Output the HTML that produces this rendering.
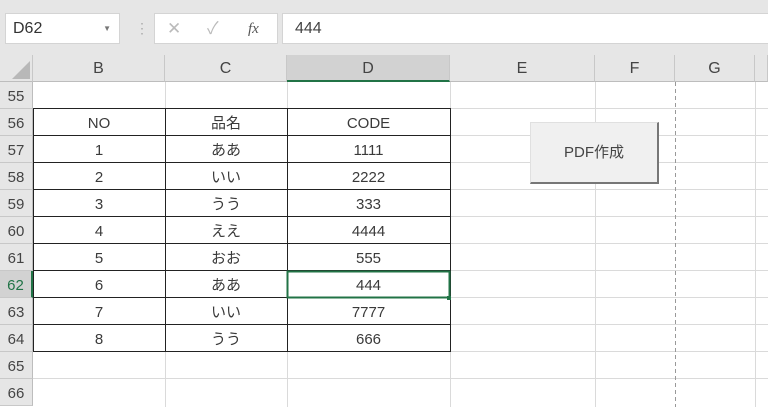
<!DOCTYPE html>
<html><head><meta charset="utf-8"><style>
*{margin:0;padding:0;box-sizing:border-box}
body{width:768px;height:407px;overflow:hidden;background:#fff;font-family:"Liberation Sans","Noto Sans CJK JP",sans-serif;color:#333;position:relative}
.abs{position:absolute}
.top{left:0;top:0;width:768px;height:55px;background:#e6e6e6}
.box{background:#fff;border:1px solid #d4d4d4}
.hdr{top:55px;height:27px;background:#e6e6e6;border-right:1px solid #c8c8c8;border-bottom:1px solid #bdbdbd;font-size:16px;text-align:center;line-height:27px;color:#444}
.rh{left:0;width:33px;height:27px;background:#e6e6e6;border-bottom:1px solid #c8c8c8;border-right:1px solid #bdbdbd;font-size:15px;text-align:center;line-height:29px;color:#444}
.c{height:27px;font-size:15px;text-align:center;line-height:30px;color:#3a3a3a}
</style></head><body>
<div class="abs top"></div>
<div class="abs box" style="left:5px;top:13px;width:115px;height:31px;font-size:16px;line-height:30px;padding-left:7px">D62<span style="position:absolute;right:8px;top:0;font-size:8px;color:#777">▼</span></div>
<div class="abs" style="left:135px;top:20px;color:#aaa;font-size:14px">⋮</div>
<div class="abs box" style="left:154px;top:13px;width:124px;height:31px;color:#bbb;font-size:17px;line-height:30px">
<span style="position:absolute;left:12px">✕</span><span style="position:absolute;left:52px">✓</span><span style="position:absolute;left:93px;color:#555;font-family:'Liberation Serif',serif;font-style:italic;font-size:15px">fx</span></div>
<div class="abs box" style="left:282px;top:13px;width:490px;height:31px;font-size:16px;line-height:30px;padding-left:12px;color:#444">444</div>
<svg class="abs" style="left:0;top:0" width="768" height="407">
<g stroke="#dadada" stroke-width="1">
<line x1="165.5" y1="82" x2="165.5" y2="407"/><line x1="287.5" y1="82" x2="287.5" y2="407"/><line x1="450.5" y1="82" x2="450.5" y2="407"/><line x1="595.5" y1="82" x2="595.5" y2="407"/><line x1="755.5" y1="82" x2="755.5" y2="407"/>
<line x1="33" y1="108.5" x2="768" y2="108.5"/><line x1="33" y1="135.5" x2="768" y2="135.5"/><line x1="33" y1="162.5" x2="768" y2="162.5"/><line x1="33" y1="189.5" x2="768" y2="189.5"/><line x1="33" y1="216.5" x2="768" y2="216.5"/><line x1="33" y1="243.5" x2="768" y2="243.5"/><line x1="33" y1="270.5" x2="768" y2="270.5"/><line x1="33" y1="297.5" x2="768" y2="297.5"/><line x1="33" y1="324.5" x2="768" y2="324.5"/><line x1="33" y1="351.5" x2="768" y2="351.5"/><line x1="33" y1="378.5" x2="768" y2="378.5"/>
</g>
<line x1="675.5" y1="82" x2="675.5" y2="407" stroke="#999" stroke-dasharray="4,3"/>
<g stroke="#222" stroke-width="1">
<rect x="33.5" y="108.5" width="417" height="243" fill="none"/>
<line x1="165.5" y1="108" x2="165.5" y2="352"/><line x1="287.5" y1="108" x2="287.5" y2="352"/>
<line x1="33" y1="135.5" x2="450" y2="135.5"/><line x1="33" y1="162.5" x2="450" y2="162.5"/><line x1="33" y1="189.5" x2="450" y2="189.5"/><line x1="33" y1="216.5" x2="450" y2="216.5"/><line x1="33" y1="243.5" x2="450" y2="243.5"/><line x1="33" y1="270.5" x2="450" y2="270.5"/><line x1="33" y1="297.5" x2="450" y2="297.5"/><line x1="33" y1="324.5" x2="450" y2="324.5"/>
</g>
<rect x="287.5" y="271.5" width="162" height="26" fill="none" stroke="#217346" stroke-width="2"/>
<rect x="447" y="296" width="4" height="4" fill="#217346"/>
</svg>
<div class="abs hdr" style="left:0;width:33px"><svg width="33" height="27"><polygon points="30,6 30,24 12,24" fill="#b8b8b8"/></svg></div>
<div class="abs hdr" style="left:33px;width:132px">B</div>
<div class="abs hdr" style="left:165px;width:122px">C</div>
<div class="abs hdr" style="left:287px;width:163px;background:#d2d2d2;border-bottom:2px solid #217346">D</div>
<div class="abs hdr" style="left:450px;width:145px">E</div>
<div class="abs hdr" style="left:595px;width:80px">F</div>
<div class="abs hdr" style="left:675px;width:80px">G</div>
<div class="abs hdr" style="left:755px;width:13px"></div>
<div class="abs rh" style="top:82px">55</div>
<div class="abs rh" style="top:109px">56</div>
<div class="abs rh" style="top:136px">57</div>
<div class="abs rh" style="top:163px">58</div>
<div class="abs rh" style="top:190px">59</div>
<div class="abs rh" style="top:217px">60</div>
<div class="abs rh" style="top:244px">61</div>
<div class="abs rh" style="top:271px;background:#d2d2d2;color:#217346;border-right:2px solid #217346">62</div>
<div class="abs rh" style="top:298px">63</div>
<div class="abs rh" style="top:325px">64</div>
<div class="abs rh" style="top:352px">65</div>
<div class="abs rh" style="top:379px">66</div>
<div class="abs" style="left:33px;top:109px;width:417px">
<div style="display:flex"><div class="c" style="width:132px">NO</div><div class="c" style="width:122px">品名</div><div class="c" style="width:163px">CODE</div></div>
<div style="display:flex"><div class="c" style="width:132px">1</div><div class="c" style="width:122px">ああ</div><div class="c" style="width:163px">1111</div></div>
<div style="display:flex"><div class="c" style="width:132px">2</div><div class="c" style="width:122px">いい</div><div class="c" style="width:163px">2222</div></div>
<div style="display:flex"><div class="c" style="width:132px">3</div><div class="c" style="width:122px">うう</div><div class="c" style="width:163px">333</div></div>
<div style="display:flex"><div class="c" style="width:132px">4</div><div class="c" style="width:122px">ええ</div><div class="c" style="width:163px">4444</div></div>
<div style="display:flex"><div class="c" style="width:132px">5</div><div class="c" style="width:122px">おお</div><div class="c" style="width:163px">555</div></div>
<div style="display:flex"><div class="c" style="width:132px">6</div><div class="c" style="width:122px">ああ</div><div class="c" style="width:163px">444</div></div>
<div style="display:flex"><div class="c" style="width:132px">7</div><div class="c" style="width:122px">いい</div><div class="c" style="width:163px">7777</div></div>
<div style="display:flex"><div class="c" style="width:132px">8</div><div class="c" style="width:122px">うう</div><div class="c" style="width:163px">666</div></div>
</div>
<div class="abs" style="left:530px;top:122px;width:129px;height:62px;background:#f0f0f0;border-right:2px solid #777;border-bottom:2px solid #777;border-top:1px solid #e0e0e0;border-left:1px solid #e0e0e0;text-align:center;line-height:60px;font-size:15px;color:#444">PDF作成</div>
</body></html>
